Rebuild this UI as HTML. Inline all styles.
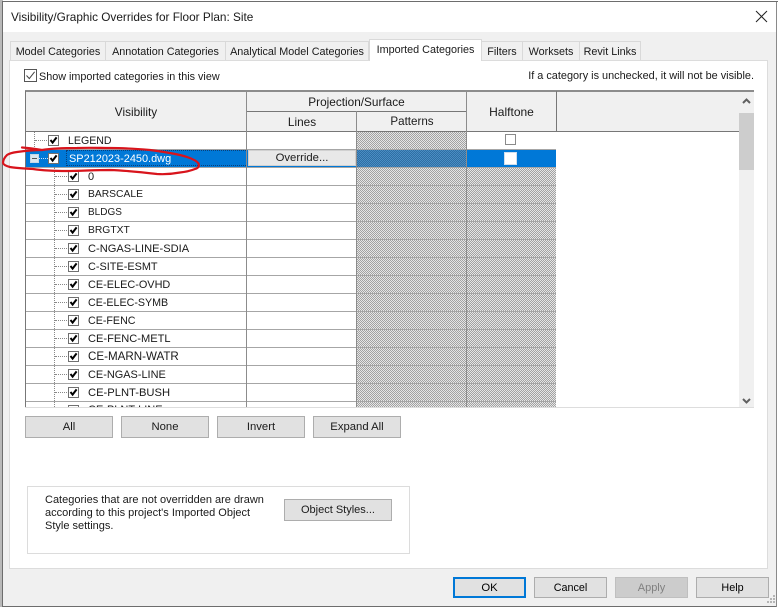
<!DOCTYPE html>
<html><head><meta charset="utf-8"><style>
html,body{margin:0;padding:0;background:#fff}
#r{position:relative;width:778px;height:607px;overflow:hidden;background:#fff;font:12px/16px "Liberation Sans",sans-serif;color:#1a1a1a}
#r div{position:absolute;box-sizing:border-box}
.t{white-space:nowrap}
.tab{top:41px;height:19px;background:#f0f0f0;border:1px solid #d9d9d9;border-bottom:0;text-align:center;line-height:20px;white-space:nowrap;font-size:10.8px}
.b{background:#e1e1e1;border:1px solid #adadad;text-align:center;line-height:21px;font-size:11.3px;white-space:nowrap}
.ck{width:11px;height:11px;background:#fff;border:1px solid #707070}
.ck svg{position:absolute;left:0;top:0}
.c{background-color:#ccc;background-image:conic-gradient(#a2a2a2 25%,#e6e6e6 0 50%,#a2a2a2 0 75%,#e6e6e6 0);background-size:2px 2px}
.rl{left:26px;width:530px;height:1px;background:#a6a6a6}
.lb{left:88px;line-height:18px;margin-top:1px;white-space:nowrap;font-size:11px}
.d{border-top:1px dotted #888;height:0}
.dv{border-left:1px dotted #888;width:0}
</style></head><body><div id="r">
<!-- backdrop / frame -->
<div style="left:0;top:0;width:3px;height:607px;background:#b9b9b9"></div>
<div style="left:2px;top:1px;width:776px;height:606px;background:#fff;border:1px solid #6d6d6d;border-right:0"></div>
<div style="left:3px;top:32px;width:773px;height:574px;background:#f0f0f0"></div>
<div style="left:776px;top:2px;width:2px;height:605px;background:#fff;border-left:1px solid #8a8a8a"></div>
<div class="t" style="left:11px;top:9px;font-size:11.8px">Visibility/Graphic Overrides for Floor Plan: Site</div>
<svg style="position:absolute;left:755px;top:10px" width="13" height="13"><path d="M1 1L12 12M12 1L1 12" stroke="#222" stroke-width="1" fill="none"/></svg>
<!-- panel -->
<div style="left:9px;top:60px;width:759px;height:509px;background:#fff;border:1px solid #dcdcdc"></div>
<!-- tabs -->
<div class="tab" style="left:10px;width:96px">Model Categories</div>
<div class="tab" style="left:105px;width:121px">Annotation Categories</div>
<div class="tab" style="left:225px;width:144px">Analytical Model Categories</div>
<div class="tab" style="left:369px;top:39px;width:113px;height:22px;background:#fff;border-bottom:0;z-index:2">Imported Categories</div>
<div class="tab" style="left:481px;width:42px">Filters</div>
<div class="tab" style="left:522px;width:58px">Worksets</div>
<div class="tab" style="left:579px;width:62px">Revit Links</div>
<!-- top controls -->
<div class="ck" style="left:24px;top:69px;width:13px;height:13px;border-color:#555"><svg width="11" height="11"><path d="M1.5 5.5L4.3 8.6L9.6 1.8" stroke="#444" stroke-width="1" fill="none"/></svg></div>
<div class="t" style="left:39px;top:69px;font-size:10.8px">Show imported categories in this view</div>
<div class="t" style="right:24px;top:68px;font-size:10.9px">If a category is unchecked, it will not be visible.</div>
<!-- grid header -->
<div style="left:25px;top:91px;width:714px;height:316px;background:#fff"></div>
<div style="left:25px;top:91px;width:714px;height:40px;background:#f0f0f0"></div>
<div style="left:25px;top:90px;width:729px;height:2px;background:#8c8c8c"></div>
<div style="left:25px;top:91px;width:1px;height:316px;background:#777"></div>
<div style="left:25px;top:407px;width:729px;height:1px;background:#ddd"></div>
<div style="left:26px;top:131px;width:713px;height:1px;background:#777"></div>
<div style="left:246px;top:111px;width:220px;height:1px;background:#777"></div>
<div class="t" style="left:26px;top:104px;width:220px;text-align:center;font-size:11.8px">Visibility</div>
<div class="t" style="left:247px;top:94px;width:219px;text-align:center;font-size:11.8px">Projection/Surface</div>
<div class="t" style="left:247px;top:114px;width:110px;text-align:center;font-size:11.8px">Lines</div>
<div class="t" style="left:357px;top:114px;width:110px;text-align:center;font-size:11.6px">Patterns</div>
<div class="t" style="left:467px;top:104px;width:89px;text-align:center;font-size:12px">Halftone</div>
<!-- hatch -->
<div class="c" style="left:357px;top:132px;width:110px;height:275px"></div>
<div class="c" style="left:467px;top:167px;width:89px;height:240px"></div>
<!-- selected row -->
<div style="left:26px;top:149px;width:530px;height:18px;background:#0078d7"></div>
<div style="left:357px;top:149px;width:109px;height:18px;background-color:#3a7fb8;background-image:conic-gradient(#2f6ea3 25%,#4a8dc4 0 50%,#2f6ea3 0 75%,#4a8dc4 0);background-size:2px 2px"></div>
<!-- row lines -->
<div class="rl" style="top:149px"></div><div class="rl" style="top:167px"></div><div class="rl" style="top:185px"></div><div class="rl" style="top:203px"></div><div class="rl" style="top:221px"></div><div class="rl" style="top:239px"></div><div class="rl" style="top:257px"></div><div class="rl" style="top:275px"></div><div class="rl" style="top:293px"></div><div class="rl" style="top:311px"></div><div class="rl" style="top:329px"></div><div class="rl" style="top:347px"></div><div class="rl" style="top:365px"></div><div class="rl" style="top:383px"></div><div class="rl" style="top:401px"></div>
<!-- column lines -->
<div style="left:246px;top:91px;width:1px;height:316px;background:#8c8c8c"></div>
<div style="left:356px;top:111px;width:1px;height:296px;background:#8c8c8c"></div>
<div style="left:466px;top:91px;width:1px;height:316px;background:#8c8c8c"></div>
<div style="left:556px;top:91px;width:1px;height:41px;background:#777"></div>
<!-- tree lines -->
<div class="dv" style="left:34px;top:132px;height:17px"></div>
<div class="d" style="left:35px;top:140px;width:12px"></div>
<div class="d" style="left:39px;top:158px;width:9px;border-color:#cfe4f7"></div>
<div class="dv" style="left:54px;top:167px;height:240px"></div>
<div class="d" style="left:55px;top:176px;width:12px"></div><div class="d" style="left:55px;top:194px;width:12px"></div><div class="d" style="left:55px;top:212px;width:12px"></div><div class="d" style="left:55px;top:230px;width:12px"></div><div class="d" style="left:55px;top:248px;width:12px"></div><div class="d" style="left:55px;top:266px;width:12px"></div><div class="d" style="left:55px;top:284px;width:12px"></div><div class="d" style="left:55px;top:302px;width:12px"></div><div class="d" style="left:55px;top:320px;width:12px"></div><div class="d" style="left:55px;top:338px;width:12px"></div><div class="d" style="left:55px;top:356px;width:12px"></div><div class="d" style="left:55px;top:374px;width:12px"></div><div class="d" style="left:55px;top:392px;width:12px"></div>
<!-- expander -->
<div style="left:30px;top:154px;width:9px;height:9px;background:#dbe6f0;border:1px solid #c6d6e6"></div>
<div style="left:32px;top:158px;width:5px;height:1px;background:#555"></div>
<!-- check icons defined per row -->
<div class="ck" style="left:48px;top:135px"><svg width="9" height="9"><path d="M1.5 4L3.6 6.6L7.6 1.4" stroke="#000" stroke-width="2" fill="none"/></svg></div>
<div class="ck" style="left:48px;top:153px"><svg width="9" height="9"><path d="M1.5 4L3.6 6.6L7.6 1.4" stroke="#000" stroke-width="2" fill="none"/></svg></div>
<div class="t" style="left:68px;top:132px;line-height:18px;font-size:10.6px">LEGEND</div>
<div class="t" style="left:66px;top:150px;width:180px;height:16px;line-height:16px;color:#fff;padding-left:2px;font-size:10.95px;border:1px dotted #0a3f78;border-right:0">SP212023-2450.dwg</div>
<div class="b" style="left:248px;top:150px;width:108px;height:16px;line-height:14px;background:#e8e8e8;border-color:#d0d0d0">Override...</div>
<div class="ck" style="left:505px;top:134px;border-color:#8a8a8a"></div>
<div class="ck" style="left:504px;top:152px;width:13px;height:13px;border:1px solid #cfdfee"></div>
<!-- layers -->
<div class="ck" style="left:68px;top:171px"><svg width="9" height="9"><path d="M1.5 4L3.6 6.6L7.6 1.4" stroke="#000" stroke-width="2" fill="none"/></svg></div><div class="lb" style="top:167px">0</div>
<div class="ck" style="left:68px;top:189px"><svg width="9" height="9"><path d="M1.5 4L3.6 6.6L7.6 1.4" stroke="#000" stroke-width="2" fill="none"/></svg></div><div class="lb" style="top:185px;font-size:10.3px">BARSCALE</div>
<div class="ck" style="left:68px;top:207px"><svg width="9" height="9"><path d="M1.5 4L3.6 6.6L7.6 1.4" stroke="#000" stroke-width="2" fill="none"/></svg></div><div class="lb" style="top:203px;font-size:10px">BLDGS</div>
<div class="ck" style="left:68px;top:225px"><svg width="9" height="9"><path d="M1.5 4L3.6 6.6L7.6 1.4" stroke="#000" stroke-width="2" fill="none"/></svg></div><div class="lb" style="top:221px;font-size:10.3px">BRGTXT</div>
<div class="ck" style="left:68px;top:243px"><svg width="9" height="9"><path d="M1.5 4L3.6 6.6L7.6 1.4" stroke="#000" stroke-width="2" fill="none"/></svg></div><div class="lb" style="top:239px;font-size:11.1px">C-NGAS-LINE-SDIA</div>
<div class="ck" style="left:68px;top:261px"><svg width="9" height="9"><path d="M1.5 4L3.6 6.6L7.6 1.4" stroke="#000" stroke-width="2" fill="none"/></svg></div><div class="lb" style="top:257px;font-size:10.9px">C-SITE-ESMT</div>
<div class="ck" style="left:68px;top:279px"><svg width="9" height="9"><path d="M1.5 4L3.6 6.6L7.6 1.4" stroke="#000" stroke-width="2" fill="none"/></svg></div><div class="lb" style="top:275px;font-size:10.9px">CE-ELEC-OVHD</div>
<div class="ck" style="left:68px;top:297px"><svg width="9" height="9"><path d="M1.5 4L3.6 6.6L7.6 1.4" stroke="#000" stroke-width="2" fill="none"/></svg></div><div class="lb" style="top:293px;font-size:10.7px">CE-ELEC-SYMB</div>
<div class="ck" style="left:68px;top:315px"><svg width="9" height="9"><path d="M1.5 4L3.6 6.6L7.6 1.4" stroke="#000" stroke-width="2" fill="none"/></svg></div><div class="lb" style="top:311px;font-size:10.7px">CE-FENC</div>
<div class="ck" style="left:68px;top:333px"><svg width="9" height="9"><path d="M1.5 4L3.6 6.6L7.6 1.4" stroke="#000" stroke-width="2" fill="none"/></svg></div><div class="lb" style="top:329px;font-size:11.1px">CE-FENC-METL</div>
<div class="ck" style="left:68px;top:351px"><svg width="9" height="9"><path d="M1.5 4L3.6 6.6L7.6 1.4" stroke="#000" stroke-width="2" fill="none"/></svg></div><div class="lb" style="top:347px;font-size:11.6px">CE-MARN-WATR</div>
<div class="ck" style="left:68px;top:369px"><svg width="9" height="9"><path d="M1.5 4L3.6 6.6L7.6 1.4" stroke="#000" stroke-width="2" fill="none"/></svg></div><div class="lb" style="top:365px;font-size:10.95px">CE-NGAS-LINE</div>
<div class="ck" style="left:68px;top:387px"><svg width="9" height="9"><path d="M1.5 4L3.6 6.6L7.6 1.4" stroke="#000" stroke-width="2" fill="none"/></svg></div><div class="lb" style="top:383px;font-size:11.2px">CE-PLNT-BUSH</div>
<div style="left:26px;top:401px;width:713px;height:6px;overflow:hidden">
<div class="ck" style="left:42px;top:4px"></div><div class="lb" style="left:62px;top:-1px">CE-PLNT-LINE</div></div>
<!-- scrollbar -->
<div style="left:739px;top:92px;width:15px;height:315px;background:#f0f0f0"></div>
<div style="left:739px;top:113px;width:15px;height:57px;background:#cdcdcd"></div>
<svg style="position:absolute;left:741px;top:96px" width="11" height="10"><path d="M2 7L5.5 3.5L9 7" stroke="#606060" stroke-width="2" fill="none"/></svg>
<svg style="position:absolute;left:741px;top:396px" width="11" height="10"><path d="M2 3L5.5 6.5L9 3" stroke="#606060" stroke-width="2" fill="none"/></svg>
<!-- buttons -->
<div class="b" style="left:25px;top:416px;width:88px;height:22px">All</div>
<div class="b" style="left:121px;top:416px;width:88px;height:22px">None</div>
<div class="b" style="left:217px;top:416px;width:88px;height:22px">Invert</div>
<div class="b" style="left:313px;top:416px;width:88px;height:22px">Expand All</div>
<!-- group -->
<div style="left:27px;top:486px;width:383px;height:68px;border:1px solid #dcdcdc"></div>
<div style="left:45px;top:494px;font-size:11px;line-height:13px;white-space:nowrap">Categories that are not overridden are drawn<br>according to this project's Imported Object<br>Style settings.</div>
<div class="b" style="left:284px;top:499px;width:108px;height:22px;font-size:11px;line-height:20px">Object Styles...</div>
<!-- footer -->
<div class="b" style="left:453px;top:577px;width:73px;height:21px;border:2px solid #0078d7;line-height:19px;color:#000">OK</div>
<div class="b" style="left:534px;top:577px;width:73px;height:21px;line-height:21px;color:#000;font-size:10.8px">Cancel</div>
<div class="b" style="left:615px;top:577px;width:73px;height:21px;line-height:21px;background:#cccccc;border-color:#bfbfbf;color:#808080;font-size:11px">Apply</div>
<div class="b" style="left:696px;top:577px;width:73px;height:21px;line-height:21px;color:#000;font-size:10.8px">Help</div>
<svg style="position:absolute;left:765px;top:594px" width="12" height="12"><g fill="#b5b5b5"><rect x="8" y="1" width="2" height="2"/><rect x="5" y="4" width="2" height="2"/><rect x="8" y="4" width="2" height="2"/><rect x="2" y="7" width="2" height="2"/><rect x="5" y="7" width="2" height="2"/><rect x="8" y="7" width="2" height="2"/></g></svg>
<!-- red hand-drawn ellipse -->
<svg style="position:absolute;left:0;top:0;z-index:5" width="778" height="607"><path d="M22 147.5C30 148 36 149 42 150C55 148 66 148 77 148C90 147.500 100 148 110 148C125 148 138 149 150 150C165 152 178 154 187 157C193 159 197 161 198.500 163.500C199.500 166 198.500 168 195 169C190 171 185 172 180 172.500C172 174 165 174.500 157 174C140 172 125 170.500 110 170C95 170 80 171 67 171C55 171 43 170.500 33 169C24 168.500 15 168 10 167C6 166 3.500 165 3 163C3 160 5 157 7 155C10 153 13 152.500 17 152C24 151 32 150 42 150" stroke="#d8141c" stroke-width="2.2" fill="none" stroke-linecap="round"/></svg>
</div></body></html>
